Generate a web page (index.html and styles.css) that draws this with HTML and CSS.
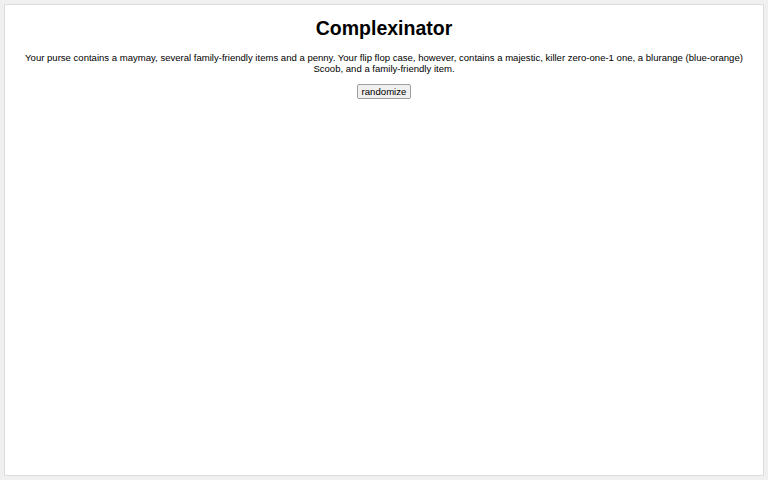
FILE: index.html
```html
<!DOCTYPE html>
<html>
<head>
<meta charset="utf-8">
<link rel="stylesheet" href="styles.css">
</head>
<body>
<div class="card">
  <h1 class="title">Complexinator</h1>
  <p class="story">Your purse contains a maymay, several family-friendly items and a penny. Your flip flop case, however, contains a majestic, killer zero-one-1 one, a blurange (blue-orange) Scoob, and a family-friendly item.</p>
  <div class="actions"><button class="btn">randomize</button></div>
</div>
</body>
</html>
```
FILE: styles.css
```css
html, body {
  margin: 0;
  padding: 0;
  height: 100%;
}
body {
  background: #f0f0f0;
  padding: 4px 4px 4px 4px;
  box-sizing: border-box;
  font-family: "Liberation Sans", Arial, sans-serif;
}
.card {
  background: #fff;
  border: 1px solid #dcdcdc;
  height: 472px;
  box-sizing: border-box;
  padding: 12px 16px;
  text-align: center;
}
.title {
  font-size: 19.5px;
  font-weight: bold;
  margin: 0 0 12px 0;
  line-height: 23px;
  color: #000;
}
.story {
  font-size: 9.55px;
  line-height: 11px;
  margin: 0 0 7px 0;
  color: #000;
}
.btn {
  font-family: "Liberation Sans", Arial, sans-serif;
  font-size: 9.6px;
  padding: 1px 4px;
  background: #f0f0f0;
  border: 1px solid #a0a0a0;
  border-radius: 2px;
  color: #000;
}
```
